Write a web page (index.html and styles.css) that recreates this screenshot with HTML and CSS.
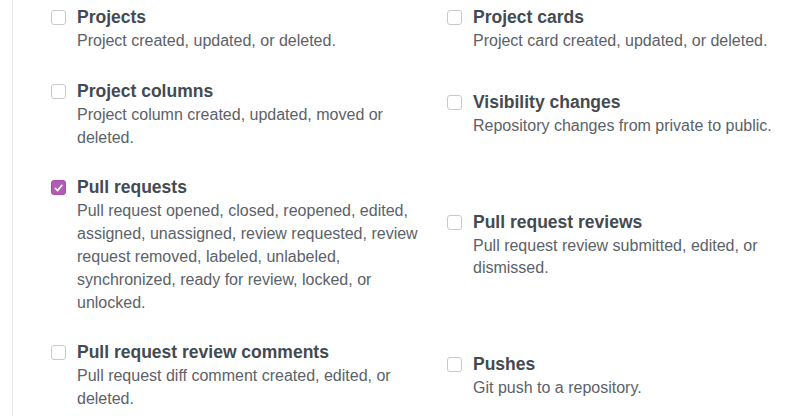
FILE: index.html
```html
<!DOCTYPE html>
<html lang="en">
<head>
<meta charset="utf-8">
<link rel="stylesheet" href="styles.css">
</head>
<body>
<div class="events">
  <div class="grid">
    <label class="item">
      <span class="box"></span>
      <span class="text"><span class="title">Projects</span><span class="desc">Project created, updated, or deleted.</span></span>
    </label>
    <label class="item">
      <span class="box"></span>
      <span class="text"><span class="title">Project cards</span><span class="desc">Project card created, updated, or deleted.</span></span>
    </label>
    <label class="item">
      <span class="box"></span>
      <span class="text"><span class="title">Project columns</span><span class="desc">Project column created, updated, moved or deleted.</span></span>
    </label>
    <label class="item">
      <span class="box"></span>
      <span class="text"><span class="title">Visibility changes</span><span class="desc">Repository changes from private to public.</span></span>
    </label>
    <label class="item">
      <span class="box checked"><svg viewBox="0 0 14 14" width="14" height="14"><path d="M3.6 7.3 L6 9.8 L10.6 4.2" fill="none" stroke="#fff" stroke-width="1.8" stroke-linecap="round" stroke-linejoin="round"/></svg></span>
      <span class="text"><span class="title">Pull requests</span><span class="desc">Pull request opened, closed, reopened, edited, assigned, unassigned, review requested, review request removed, labeled, unlabeled, synchronized, ready for review, locked, or unlocked.</span></span>
    </label>
    <label class="item">
      <span class="box"></span>
      <span class="text"><span class="title">Pull request reviews</span><span class="desc">Pull request review submitted, edited, or dismissed.</span></span>
    </label>
    <label class="item">
      <span class="box"></span>
      <span class="text"><span class="title">Pull request review comments</span><span class="desc">Pull request diff comment created, edited, or deleted.</span></span>
    </label>
    <label class="item">
      <span class="box"></span>
      <span class="text"><span class="title">Pushes</span><span class="desc">Git push to a repository.</span></span>
    </label>
  </div>
</div>
</body>
</html>
```

FILE: styles.css
```css
html, body {
  margin: 0;
  padding: 0;
  background: #ffffff;
  overflow: hidden;
}
body {
  font-family: "Liberation Sans", Arial, Helvetica, sans-serif;
  width: 800px;
  height: 416px;
}
.events {
  margin-left: 12px;
  border-left: 1px solid #e3e5e8;
  height: 416px;
  padding: 5px 0 0 38px;
  box-sizing: border-box;
}
.grid {
  display: grid;
  grid-template-columns: 396px 1fr;
  row-gap: 26px;
  align-items: center;
}
.item {
  display: flex;
  align-items: flex-start;
  padding-right: 20px;
}
.box {
  flex: none;
  width: 13px;
  height: 13px;
  margin-top: 5px;
  margin-right: 11px;
  border: 1px solid #c7cacd;
  border-radius: 3px;
  background: #fff;
  display: flex;
  align-items: center;
  justify-content: center;
}
.box.checked {
  background: #b45bb4;
  border-color: #a64fa6;
}
.box svg {
  display: block;
}
.text {
  display: flex;
  flex-direction: column;
}
.title {
  font-size: 17.5px;
  font-weight: bold;
  line-height: 25px;
  color: #434a52;
}
.desc {
  font-size: 16px;
  line-height: 22.8px;
  color: #5b6269;
}
```
